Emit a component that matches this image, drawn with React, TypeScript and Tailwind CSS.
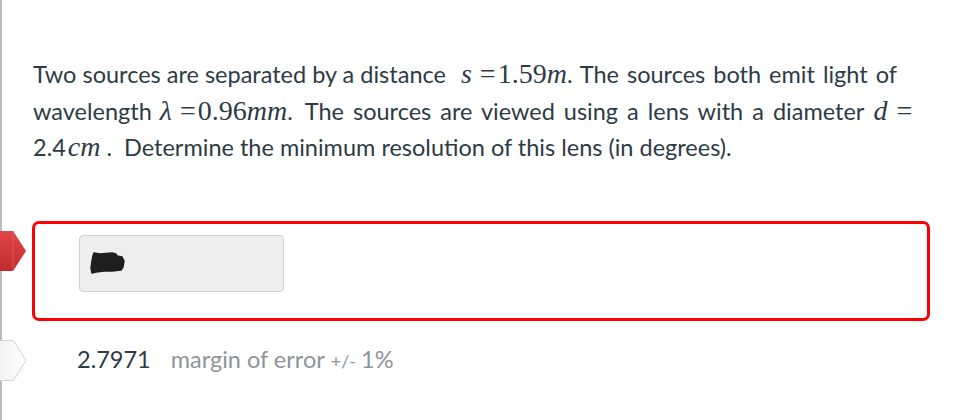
import React from "react";

const mathFont = "font-['Liberation_Serif',serif]";

function M({ children, className = "" }: { children: React.ReactNode; className?: string }) {
  return <span className={`${mathFont} italic text-[28px] leading-none ${className}`}>{children}</span>;
}

function R({ children, className = "" }: { children: React.ReactNode; className?: string }) {
  return <span className={`${mathFont} text-[28px] leading-none ${className}`}>{children}</span>;
}

function Marker({ wrong }: { wrong?: boolean }) {
  if (wrong) {
    return (
      <svg width="28" height="40" viewBox="0 0 28 40" className="block">
        <defs>
          <linearGradient id="redg" x1="0" y1="0" x2="0" y2="1">
            <stop offset="0" stopColor="#e0474a" />
            <stop offset="1" stopColor="#c32a2c" />
          </linearGradient>
        </defs>
        <path d="M0 0 H13 L26 20 L13 40 H0 Z" fill="url(#redg)" />
        <path d="M13 0 V40" stroke="#e86a6c" strokeWidth="1" opacity="0.6" />
      </svg>
    );
  }
  return (
    <svg width="28" height="41" viewBox="0 0 28 41" className="block">
      <defs>
        <linearGradient id="grayg" x1="0" y1="0" x2="1" y2="0">
          <stop offset="0" stopColor="#f1f1f1" />
          <stop offset="1" stopColor="#ffffff" />
        </linearGradient>
      </defs>
      <path d="M-1 0.5 H13.5 L26 20.5 L13.5 40.5 H-1 Z" fill="url(#grayg)" stroke="#d2d2d2" strokeWidth="1" />
    </svg>
  );
}

export default function App() {
  return (
    <main className="min-h-[420px] bg-white border-l-2 border-[#b8bcbf] font-['Lato','Liberation_Sans',sans-serif] text-[#2d3b45]">
      <div className="w-[920px] pl-[31px] pt-[56px]">
        <p className="text-[23.5px] leading-[36.5px]">
          Two sources are separated by a distance&nbsp; <M className="ml-[3px]">s</M>
          <R className="ml-[8px]">=</R>
          <R className="ml-[2px]">1.59</R>
          <M>m</M>.<span className="[word-spacing:2px]"> The sources both emit light of </span>wavelength{" "}
          <M className="ml-[2px]">λ</M>
          <R className="ml-[8px]">=</R>
          <R className="ml-[2px]">0.96</R>
          <M>mm</M>.&nbsp;{" "}
          <span className="[word-spacing:3px]">The sources are viewed using a lens with a diameter</span>{" "}
          <M className="ml-[3px]">d</M>
          <R className="ml-[9px]">=</R>{" "}
          2.4<M className="ml-[2px]">cm</M> .&nbsp; Determine the minimum resolution of this lens (in degrees).
        </p>
      </div>

      <div className="mt-[55px] flex items-start">
        <div className="mt-[10px] w-[28px] -ml-[2px]">
          <Marker wrong />
        </div>
        <div className="ml-[4px] h-[100px] w-[898px] rounded-[7px] border-[3px] border-[#ff0000] pl-[44px] pt-[11px]">
          <div className="flex h-[57px] w-[205px] items-center rounded-[4px] border border-[#d0d0d0] bg-[#eeeeee] pl-[10px]">
            <svg width="36" height="24" viewBox="0 0 36 24">
              <path
                d="M4 2 L10 3 L22 2 L26 3 L27 5 L32 6 L34 10 L33 16 L31 19 L22 20 L14 20 L6 21 L2 22 L1 17 L2 10 L3 5 Z"
                fill="#1e1e1e"
                stroke="#1e1e1e"
                strokeWidth="1.5"
                strokeLinejoin="round"
              />
            </svg>
          </div>
        </div>
      </div>

      <div className="mt-[19px] flex items-center">
        <div className="w-[28px] -ml-[2px]">
          <Marker />
        </div>
        <div className="ml-[49px] flex items-baseline text-[23.5px]">
          <span className="text-[#2d3b45]">2.7971</span>
          <span className="ml-[20px] text-[#8d959a]">margin of error</span>
          <span className="ml-[6px] text-[18px] text-[#8d959a]">+/-</span>
          <span className="ml-[5px] text-[#8d959a]">1%</span>
        </div>
      </div>
    </main>
  );
}
